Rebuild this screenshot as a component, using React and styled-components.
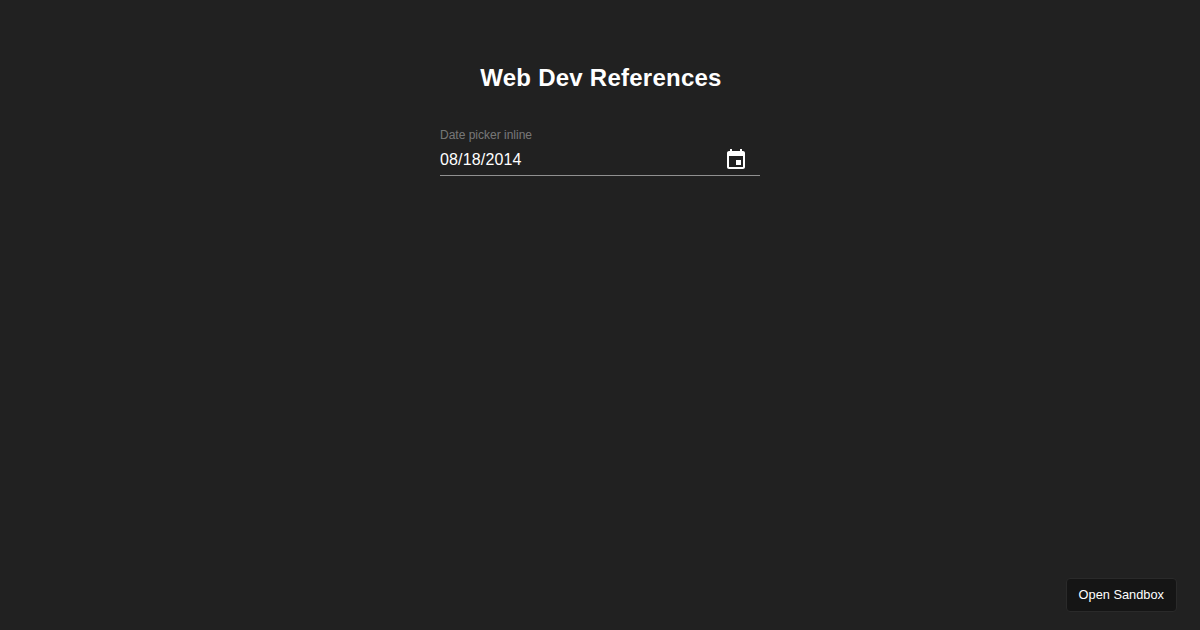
import React from "react";
import styled, { createGlobalStyle } from "styled-components";

const GlobalStyle = createGlobalStyle`
  html, body {
    margin: 0;
    height: 100%;
    background: #212121;
  }
  #root {
    height: 100%;
  }
`;

const Page = styled.main`
  height: 630px;
  box-sizing: border-box;
  padding-top: 61px;
  display: flex;
  flex-direction: column;
  align-items: center;
  font-family: "Liberation Sans", Arial, sans-serif;
  color: #fff;
  position: relative;
  overflow: hidden;
`;

const Title = styled.h1`
  margin: 0 0 33px;
  padding-left: 2px;
  font-size: 24px;
  line-height: 34px;
  font-weight: 700;
  letter-spacing: 0.24px;
`;

const Field = styled.div`
  width: 320px;
  display: flex;
  flex-direction: column;
`;

const Label = styled.label`
  font-size: 12px;
  line-height: 14px;
  color: rgba(255, 255, 255, 0.4);
  margin-bottom: 2px;
`;

const InputRow = styled.div`
  display: flex;
  align-items: center;
  justify-content: space-between;
  height: 31px;
  border-bottom: 1px solid rgba(255, 255, 255, 0.5);
`;

const Value = styled.span`
  font-size: 16px;
  letter-spacing: 0.15px;
`;

const IconButton = styled.span`
  display: flex;
  margin: 1px 12px 0 0;
`;

const SandboxButton = styled.button`
  position: absolute;
  right: 23px;
  bottom: 18px;
  height: 34px;
  padding: 0 12px 2px;
  background: #151515;
  border: 1px solid #2a2a2a;
  border-radius: 4px;
  color: #fff;
  font-family: inherit;
  font-size: 12.8px;
`;

function CalendarIcon() {
  return (
    <svg width="24" height="24" viewBox="0 0 24 24" fill="#fff">
      <path d="M17 12h-5v5h5v-5zM16 1v2H8V1H6v2H5c-1.11 0-1.99.9-1.99 2L3 19c0 1.1.89 2 2 2h14c1.1 0 2-.9 2-2V5c0-1.1-.9-2-2-2h-1V1h-2zm3 18H5V8h14v11z" />
    </svg>
  );
}

export default function App() {
  return (
    <>
      <GlobalStyle />
      <Page>
        <Title>Web Dev References</Title>
        <Field>
          <Label>Date picker inline</Label>
          <InputRow>
            <Value>08/18/2014</Value>
            <IconButton>
              <CalendarIcon />
            </IconButton>
          </InputRow>
        </Field>
        <SandboxButton>Open Sandbox</SandboxButton>
      </Page>
    </>
  );
}
